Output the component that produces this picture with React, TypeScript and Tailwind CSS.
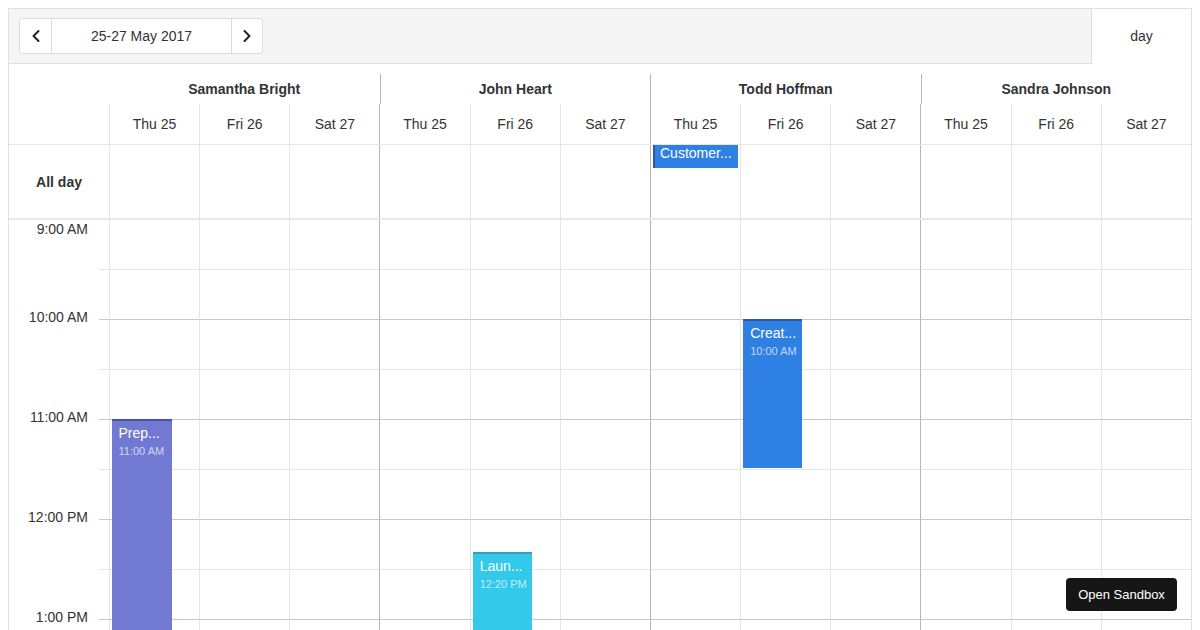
const resources = ["Samantha Bright", "John Heart", "Todd Hoffman", "Sandra Johnson"];
const days = ["Thu 25", "Fri 26", "Sat 27"];
const columns = resources.flatMap(() => days);

const labels = ["9:00 AM", "10:00 AM", "11:00 AM", "12:00 PM", "1:00 PM"];
const slotCount = 10;

const lineColor = (i: number) =>
  i > 0 && i % 3 === 0 ? "border-l-[#b5b5b5]" : "border-l-[#e6e6e6]";

type Appointment = {
  slot: number;
  col: number;
  title: string;
  time: string;
  className: string;
};

const appointments: Appointment[] = [
  {
    slot: 4,
    col: 0,
    title: "Prep...",
    time: "11:00 AM",
    className: "-top-px left-[1.5px] w-[60px] h-[300px] bg-[#7179d3] border-t-2 border-[#3f55a8]",
  },
  {
    slot: 2,
    col: 7,
    title: "Creat...",
    time: "10:00 AM",
    className: "-top-px left-[2px] w-[59px] h-[149px] bg-[#2f80e3] border-t-2 border-[#2c5aa0]",
  },
  {
    slot: 6,
    col: 4,
    title: "Laun...",
    time: "12:20 PM",
    className: "top-[32px] left-[2px] w-[59px] h-[200px] bg-[#33c9eb] border-t-2 border-[#3a9ebb]",
  },
];

const ChevronLeft = () => (
  <svg width="14" height="14" viewBox="0 0 14 14" fill="none">
    <path d="M9.5 2 4.5 7 9.5 12" stroke="#222" strokeWidth="2" strokeLinecap="round" strokeLinejoin="round" />
  </svg>
);

const ChevronRight = () => (
  <svg width="14" height="14" viewBox="0 0 14 14" fill="none">
    <path d="M4.5 2 9.5 7 4.5 12" stroke="#222" strokeWidth="2" strokeLinecap="round" strokeLinejoin="round" />
  </svg>
);

const AppointmentBox = ({ item }: { item: Appointment }) => (
  <div className={`absolute z-10 overflow-hidden whitespace-nowrap text-white pl-[7px] pt-[3px] ${item.className}`}>
    <div className="text-[14px] leading-[18px]">{item.title}</div>
    <div className="mt-[2px] text-[11px] leading-[14px] text-white/70">{item.time}</div>
  </div>
);

export default function App() {
  return (
    <div className="p-2 font-['Liberation_Sans',Arial,sans-serif] text-[#333]">
      <div className="border border-[#e0e0e0] bg-white">
        {/* toolbar */}
        <div className="flex h-[55px]">
          <div className="flex flex-1 items-center border-b border-[#e0e0e0] bg-[#f5f5f5] px-[10px]">
            <div className="flex h-9 overflow-hidden rounded-[4px] border border-[#dcdcdc] bg-white">
              <button className="flex w-[31px] items-center justify-center">
                <ChevronLeft />
              </button>
              <div className="flex w-[181px] items-center justify-center border-x border-[#dcdcdc] text-[14px]">
                25-27 May 2017
              </div>
              <button className="flex w-[30px] items-center justify-center">
                <ChevronRight />
              </button>
            </div>
          </div>
          <div className="flex w-[100px] items-center justify-center border-l border-[#e0e0e0] text-[14px]">
            day
          </div>
        </div>

        {/* resource names */}
        <div className="flex h-10">
          <div className="w-[100px]" />
          <div className="grid flex-1 grid-cols-4">
            {resources.map((name, i) => (
              <div key={name} className="pt-[10px]">
                <div
                  className={`flex h-full items-center justify-center text-[14px] font-bold ${
                    i > 0 ? "border-l border-l-[#b5b5b5]" : ""
                  }`}
                >
                  {name}
                </div>
              </div>
            ))}
          </div>
        </div>

        {/* day names */}
        <div className="flex h-[41px] border-b border-[#e6e6e6]">
          <div className="w-[100px]" />
          <div className="grid flex-1 grid-cols-12">
            {columns.map((d, i) => (
              <div key={i} className={`flex items-center justify-center border-l text-[14px] ${lineColor(i)}`}>
                {d}
              </div>
            ))}
          </div>
        </div>

        {/* all day */}
        <div className="flex h-[75px] border-b-2 border-[#e8e8e8]">
          <div className="flex w-[100px] items-center justify-center pt-[2px] text-[14px] font-bold">All day</div>
          <div className="grid flex-1 grid-cols-12">
            {columns.map((_, i) => (
              <div key={i} className={`relative border-l ${lineColor(i)}`}>
                {i === 6 && (
                  <div className="absolute left-[2px] top-0 h-[23px] w-[85px] whitespace-nowrap border-l-2 border-[#2c5aa0] bg-[#2f80e3] pl-[5px] text-[14px] leading-[16px] text-white">
                    Customer...
                  </div>
                )}
              </div>
            ))}
          </div>
        </div>

        {/* time grid */}
        <div className="flex">
          <div className="flex w-[90px] flex-col items-end pr-[11px] text-[14px] leading-5">
            {labels.map((l, i) => (
              <div key={l} className={i === 0 ? "-mt-px" : i === 1 ? "mt-[68px]" : "mt-[80px]"}>
                {l}
              </div>
            ))}
          </div>
          <div className="flex flex-1 flex-col">
            {Array.from({ length: slotCount }).map((_, s) => {
              const rowLine = s % 2 === 0 ? "border-b-[#e6e6e6]" : "border-b-[#c8c8c8]";
              return (
                <div key={s} className="flex h-[50px]">
                  <div className={`w-[10px] border-b ${rowLine}`} />
                  <div className="grid flex-1 grid-cols-12">
                    {columns.map((_, i) => {
                      const item = appointments.find((a) => a.slot === s && a.col === i);
                      return (
                        <div key={i} className={`relative border-b border-l ${rowLine} ${lineColor(i)}`}>
                          {item && <AppointmentBox item={item} />}
                        </div>
                      );
                    })}
                  </div>
                </div>
              );
            })}
          </div>
        </div>
      </div>

      <button className="fixed bottom-[19px] right-[23px] z-20 h-[33px] w-[111px] rounded-[4px] bg-[#161616] text-[13px] text-white">
        Open Sandbox
      </button>
    </div>
  );
}
